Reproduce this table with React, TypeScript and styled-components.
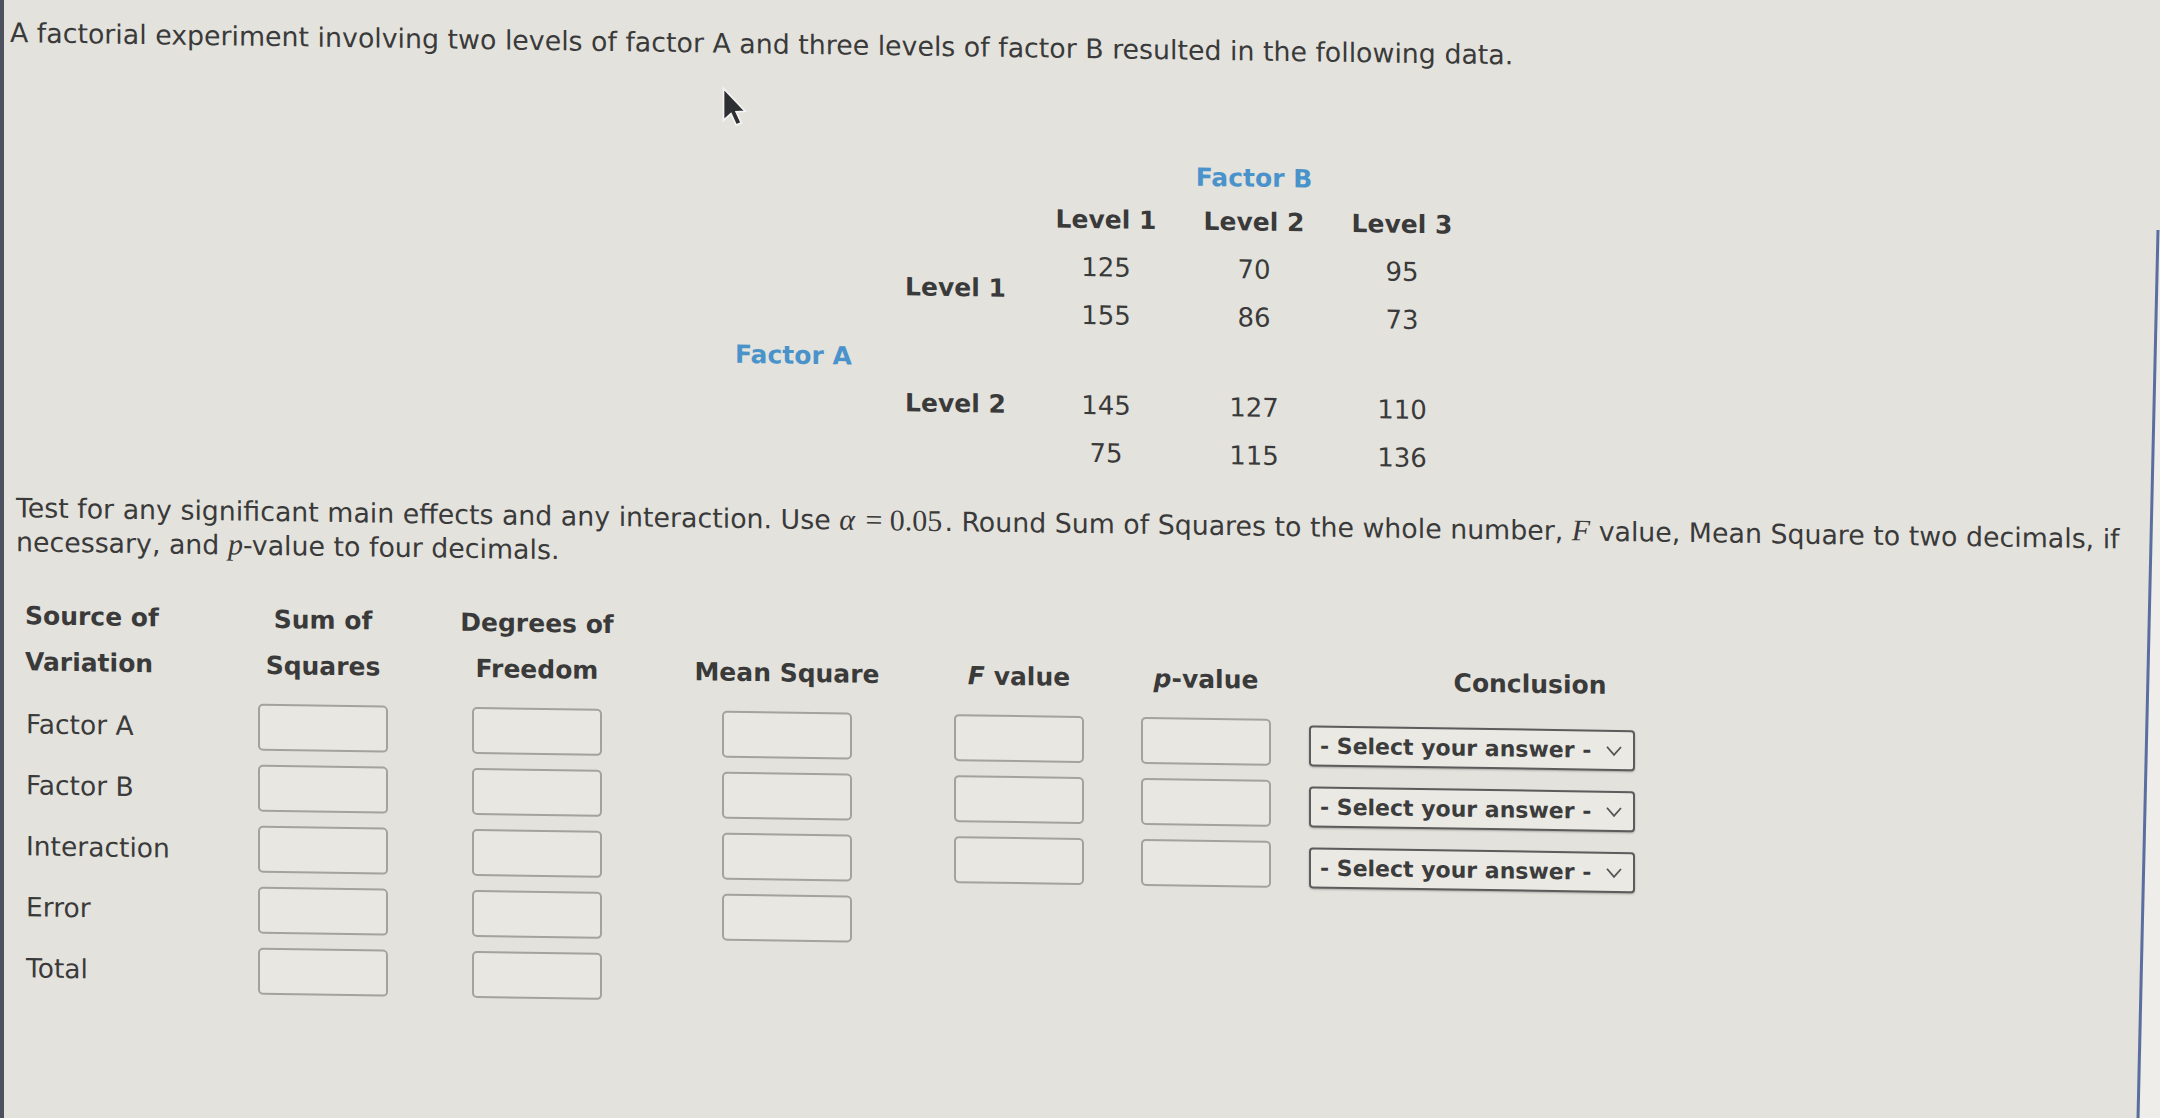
import styled, { createGlobalStyle } from "styled-components";

const GlobalStyle = createGlobalStyle`
  html, body {
    margin: 0;
    padding: 0;
    background: #e3e2dd;
  }
  body {
    font-family: "DejaVu Sans", Verdana, sans-serif;
    color: #3a3a3a;
    overflow: hidden;
  }
`

const Screen = styled.div`
  position: relative;
  width: 2160px;
  height: 1118px;
  box-sizing: border-box;
  border-left: 4px solid #4c515d;
  overflow: hidden;
`

const Page = styled.div`
  padding: 16px 0 0 6px;
  transform: skewY(0.85deg);
  transform-origin: 0 0;
`

const Intro = styled.p`
  margin: 0;
  font-size: 26.8px;
  line-height: 34px;
  white-space: nowrap;
`

const DataGrid = styled.div`
  display: grid;
  grid-template-columns: 170px 130px 148px 148px 148px;
  grid-template-rows: 44px 44px 52px 44px 44px 48px 48px;
  margin: 87px 0 0 722px;
  font-size: 26px;
`

const Cell = styled.div<{ $col: string; $row: string; $align?: string; $bold?: boolean; $blue?: boolean }>`
  grid-column: ${(p) => p.$col};
  grid-row: ${(p) => p.$row};
  display: flex;
  align-items: center;
  justify-content: ${(p) => p.$align || "center"};
  padding-left: ${(p) => (p.$align === "flex-start" ? "3px" : "0")};
  font-size: ${(p) => (p.$bold ? "25px" : "26px")};
  font-weight: ${(p) => (p.$bold ? "bold" : "normal")};
  color: ${(p) => (p.$blue ? "#4a93ca" : "#3a3a3a")};
`

const Question = styled.p`
  margin: 30px 0 0 6px;
  font-size: 26.8px;
  line-height: 34px;
  white-space: nowrap;
`

const MathVar = styled.i`
  font-family: "Liberation Serif", "Times New Roman", serif;
  font-size: 30px;
  line-height: 1;
`

const MathNum = styled.span`
  font-family: "Liberation Serif", "Times New Roman", serif;
  font-size: 30px;
  line-height: 1;
  padding: 0 2px 0 3px;
`

const AnovaGrid = styled.div`
  display: grid;
  grid-template-columns: 242px 150px 278px 222px 242px 132px 516px;
  grid-template-rows: auto;
  grid-auto-rows: 61px;
  margin: 34px 0 0 -4px;
`

const HeadCell = styled.div<{ $left?: boolean }>`
  align-self: end;
  padding: 0 0 8px ${(p) => (p.$left ? "19px" : "0")};
  text-align: ${(p) => (p.$left ? "left" : "center")};
  font-size: 25px;
  line-height: 46px;
  font-weight: bold;
`

const Row = styled.div`
  display: contents;
`

const RowLabel = styled.div`
  display: flex;
  align-items: center;
  padding-left: 20px;
  font-size: 26.5px;
`

const BoxCell = styled.div<{ $start?: boolean }>`
  display: flex;
  align-items: center;
  justify-content: ${(p) => (p.$start ? "flex-start" : "center")};
  padding-left: ${(p) => (p.$start ? "37px" : "0")};
`

const Field = styled.div`
  width: 130px;
  height: 47px;
  box-sizing: border-box;
  border: 2px solid #a3a29e;
  border-radius: 5px;
  background: #e8e7e2;
`

const Select = styled.div`
  width: 326px;
  height: 41px;
  box-sizing: border-box;
  margin-top: 6px;
  border: 2px solid #5c5c5c;
  border-radius: 4px;
  background: #eae9e4;
  box-shadow: 0 1px 2px rgba(0, 0, 0, 0.25);
  display: flex;
  align-items: center;
  justify-content: space-between;
  padding: 0 10px 0 9px;
  font-size: 22px;
  font-weight: bold;
  color: #3c3c3c;
`

const Cursor = styled.svg`
  position: absolute;
  left: 716px;
  top: 86px;
`

const EdgeLine = styled.svg`
  position: absolute;
  right: 0;
  top: 0;
`

function Chevron() {
  return (
    <svg width="18" height="12" viewBox="0 0 18 12">
      <polyline points="2,2 9,10 16,2" fill="none" stroke="#555" strokeWidth="1.8" />
    </svg>
  );
}

const rows: { label: string; ss: boolean; df: boolean; ms: boolean; f: boolean; p: boolean; c: boolean }[] = [
  { label: "Factor A", ss: true, df: true, ms: true, f: true, p: true, c: true },
  { label: "Factor B", ss: true, df: true, ms: true, f: true, p: true, c: true },
  { label: "Interaction", ss: true, df: true, ms: true, f: true, p: true, c: true },
  { label: "Error", ss: true, df: true, ms: true, f: false, p: false, c: false },
  { label: "Total", ss: true, df: true, ms: false, f: false, p: false, c: false },
];

export default function App() {
  return (
    <Screen>
      <GlobalStyle />
      <Page>
        <Intro>
          A factorial experiment involving two levels of factor A and three levels of factor B resulted in the following data.
        </Intro>

        <DataGrid>
          <Cell $col="3 / 6" $row="1" $bold $blue>Factor B</Cell>
          <Cell $col="3" $row="2" $bold>Level 1</Cell>
          <Cell $col="4" $row="2" $bold>Level 2</Cell>
          <Cell $col="5" $row="2" $bold>Level 3</Cell>

          <Cell $col="2" $row="3 / 5" $align="flex-start" $bold>Level 1</Cell>
          <Cell $col="3" $row="3">125</Cell>
          <Cell $col="4" $row="3">70</Cell>
          <Cell $col="5" $row="3">95</Cell>
          <Cell $col="3" $row="4">155</Cell>
          <Cell $col="4" $row="4">86</Cell>
          <Cell $col="5" $row="4">73</Cell>

          <Cell $col="1" $row="5" $align="flex-start" $bold $blue>Factor A</Cell>

          <Cell $col="2" $row="6" $align="flex-start" $bold>Level 2</Cell>
          <Cell $col="3" $row="6">145</Cell>
          <Cell $col="4" $row="6">127</Cell>
          <Cell $col="5" $row="6">110</Cell>
          <Cell $col="3" $row="7">75</Cell>
          <Cell $col="4" $row="7">115</Cell>
          <Cell $col="5" $row="7">136</Cell>
        </DataGrid>

        <Question>
          Test for any significant main effects and any interaction. Use <MathVar>α</MathVar>
          <MathNum> = 0.05</MathNum>. Round Sum of Squares to the whole number, <MathVar>F</MathVar> value, Mean
          Square to two decimals, if
          <br />
          necessary, and <MathVar>p</MathVar>-value to four decimals.
        </Question>

        <AnovaGrid>
          <Row>
            <HeadCell $left>Source of<br />Variation</HeadCell>
            <HeadCell>Sum of<br />Squares</HeadCell>
            <HeadCell>Degrees of<br />Freedom</HeadCell>
            <HeadCell>Mean Square</HeadCell>
            <HeadCell><i>F</i> value</HeadCell>
            <HeadCell><i>p</i>-value</HeadCell>
            <HeadCell>Conclusion</HeadCell>
          </Row>
          {rows.map((r) => (
            <Row key={r.label}>
              <RowLabel>{r.label}</RowLabel>
              <BoxCell>{r.ss && <Field />}</BoxCell>
              <BoxCell>{r.df && <Field />}</BoxCell>
              <BoxCell>{r.ms && <Field />}</BoxCell>
              <BoxCell>{r.f && <Field />}</BoxCell>
              <BoxCell>{r.p && <Field />}</BoxCell>
              <BoxCell $start>
                {r.c && (
                  <Select>
                    <span>- Select your answer -</span>
                    <Chevron />
                  </Select>
                )}
              </BoxCell>
            </Row>
          ))}
        </AnovaGrid>
      </Page>

      <Cursor width="30" height="46" viewBox="0 0 26 40">
        <path d="M3 2 L3 30 L9.5 24 L14 34 L18.5 32 L14 22.5 L22 22 Z" fill="#2d2f33" stroke="#f4f4f4" strokeWidth="1.5" />
      </Cursor>

      <EdgeLine width="40" height="1118" viewBox="0 0 40 1118">
        <polygon points="38,230 40,230 40,1118 20,1118" fill="#eeede9" />
        <line x1="38" y1="230" x2="18" y2="1118" stroke="#5a6ea0" strokeWidth="3" />
      </EdgeLine>
    </Screen>
  );
}
